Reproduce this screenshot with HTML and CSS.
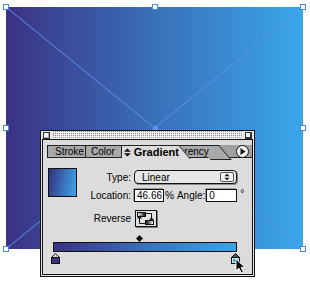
FILE: index.html
```html
<!DOCTYPE html>
<html>
<head>
<meta charset="utf-8">
<title>Gradient palette</title>
<link rel="stylesheet" href="styles.css">
</head>
<body>
<div class="stage">
  <div class="art">
    <svg class="diag" viewBox="0 0 297 242" preserveAspectRatio="none">
      <line x1="0" y1="0" x2="297" y2="242"/>
      <line x1="297" y1="0" x2="0" y2="242"/>
    </svg>
    <span class="h l t"></span><span class="h c t"></span><span class="h r t"></span>
    <span class="h l m"></span><span class="h r m"></span>
    <span class="h l b"></span><span class="h c b"></span><span class="h r b"></span>
    <span class="pivot"></span>
  </div>

  <div class="palette">
    <div class="titlebar">
      <span class="closebox"></span>
      <span class="grip"></span>
      <span class="zoombox"></span>
    </div>
    <div class="body">
      <div class="tabs">
        <div class="tab stroke">Stroke</div>
        <div class="tab color">Color</div>
        <div class="tab active">
          <svg class="updown" width="7" height="9" viewBox="0 0 7 9"><polygon points="0,3.8 3.5,0.3 7,3.8"/><polygon points="0,5.2 3.5,8.7 7,5.2"/></svg>
          <span>Gradient</span>
        </div>
        <div class="tab back"><span class="backtext">Transparency</span></div>
        <div class="tabfill">
          <svg class="menubtn" width="14" height="13" viewBox="0 0 14 13"><circle cx="6.5" cy="6.5" r="6" fill="#f4f4f4" stroke="#111"/><polygon points="4.5,3 4.5,10 9.5,6.5" fill="#111"/></svg>
        </div>
      </div>

      <div class="content">
        <div class="top">
          <div class="swatch"></div>
          <div class="form">
            <div class="row r1">
              <label>Type:</label>
              <div class="popup">
                <span>Linear</span>
                <span class="stepper"><svg width="12" height="8" viewBox="0 0 12 8"><polygon points="3.5,3.3 6,0.8 8.5,3.3"/><polygon points="3.5,4.7 6,7.2 8.5,4.7"/></svg></span>
              </div>
            </div>
            <div class="row r2">
              <label>Location:</label>
              <span class="field loc">46.66</span>
              <span class="pct">%</span>
              <span class="angle">Angle:</span>
              <span class="field ang">0</span>
              <span class="deg">°</span>
            </div>
            <div class="row r3">
              <label>Reverse</label>
              <span class="revbtn">
                <svg width="20" height="15" viewBox="0 0 20 15">
                  <defs>
                    <linearGradient id="g1" x1="0" x2="1" y1="0" y2="0"><stop offset="0" stop-color="#fff"/><stop offset="1" stop-color="#000"/></linearGradient>
                    <linearGradient id="g2" x1="0" x2="1" y1="0" y2="0"><stop offset="0" stop-color="#000"/><stop offset="1" stop-color="#fff"/></linearGradient>
                  </defs>
                  <rect x="1.5" y="1.5" width="8" height="4" fill="url(#g1)" stroke="#111"/>
                  <path d="M10 2.5 H15.5 V8" fill="none" stroke="#111"/>
                  <polygon points="13,7.5 18,7.5 15.5,10.5" fill="#111"/>
                  <rect x="9.5" y="9.5" width="8" height="4" fill="url(#g2)" stroke="#111"/>
                  <path d="M9 12.5 H3.5 V7" fill="none" stroke="#111"/>
                  <polygon points="1,7.5 6,7.5 3.5,4.5" fill="#111"/>
                </svg>
              </span>
            </div>
          </div>
        </div>

        <div class="slider">
          <div class="mid">
            <svg class="diamond" style="left:46.66%" width="7" height="7" viewBox="0 0 7 7"><polygon points="3.5,0 7,3.5 3.5,7 0,3.5"/></svg>
          </div>
          <div class="bar"></div>
          <div class="stops">
            <svg class="stop first" width="9" height="11" viewBox="0 0 9 11"><polygon points="4.5,0.5 8.5,4.5 0.5,4.5" fill="#d8d8d8" stroke="#111"/><rect x="0.5" y="4.5" width="8" height="6" fill="#3b3284" stroke="#111"/></svg>
            <svg class="stop last" width="9" height="11" viewBox="0 0 9 11"><polygon points="4.5,0.5 8.5,4.5 0.5,4.5" fill="#555" stroke="#111"/><rect x="0.5" y="4.5" width="8" height="6" fill="#3aa6ea" stroke="#111"/><rect x="1.5" y="5.5" width="6" height="4" fill="none" stroke="#cfe8fa"/></svg>
          </div>
        </div>
      </div>
    </div>
  </div>

  <svg class="cursor" width="12" height="17" viewBox="0 0 12 17"><path d="M1 1 L1 13 L4 10.2 L6.3 15 L8.4 14 L6.2 9.3 L10 9.3 Z" fill="#000" stroke="#fff" stroke-width="1" stroke-linejoin="miter"/></svg>
</div>
</body>
</html>
```
FILE: styles.css
```css
* { box-sizing: border-box; }
html, body { margin: 0; background: #fff; }
body {
  font-family: "Liberation Sans", Arial, sans-serif;
  font-size: 10px;
  color: #000;
}
.stage {
  position: relative;
  width: 310px;
  height: 283px;
  overflow: hidden;
}

/* artwork on the canvas */
.art {
  position: absolute;
  left: 6px;
  top: 7px;
  width: 297px;
  height: 242px;
  background: linear-gradient(to right, #3b3284 0%, #3a6cb6 46.66%, #3aa6ea 100%);
}
.diag {
  position: absolute;
  left: 0;
  top: 0;
  width: 100%;
  height: 100%;
}
.diag line { stroke: #5c92ea; stroke-width: 1; }
.h {
  position: absolute;
  width: 6px;
  height: 6px;
  margin: -3px 0 0 -3px;
  background: #fff;
  border: 1px solid #4a86e2;
}
.h.l { left: 0; }
.h.c { left: 50%; }
.h.r { left: 100%; }
.h.t { top: 0; }
.h.m { top: 50%; }
.h.b { top: 100%; }
.pivot {
  position: absolute;
  left: 50%;
  top: 50%;
  width: 5px;
  height: 5px;
  margin: -2px 0 0 -2px;
  background: #5a96ee;
}

/* floating palette window */
.palette {
  position: absolute;
  left: 40px;
  top: 130px;
  width: 215px;
  height: 147px;
  border: 1px solid #111;
  background: #e8e8e8;
  display: flex;
  flex-direction: column;
}
.titlebar {
  height: 8px;
  display: flex;
  align-items: center;
  padding: 0 2px;
}
.closebox {
  width: 7px;
  height: 7px;
  border: 1px solid #333;
  background: #f4f4f4;
  box-shadow: inset -1px -1px 0 #aaa;
}
.grip {
  flex: 1;
  height: 8px;
  margin: 0 2px 0 3px;
  background:
    linear-gradient(90deg, transparent 1px, #efefef 1px) 0 0 / 2px 2px,
    linear-gradient(transparent 1px, #efefef 1px) 0 0 / 2px 2px,
    #8e8e8e;
}
.zoombox {
  position: relative;
  width: 7px;
  height: 7px;
  border: 1px solid #333;
  background: #f4f4f4;
}
.zoombox::after {
  content: "";
  position: absolute;
  left: 0;
  top: 0;
  width: 4px;
  height: 4px;
  border-right: 1px solid #333;
  border-bottom: 1px solid #333;
}
.body {
  flex: 1;
  margin: 0 1px 1px;
  border: 1px solid #111;
  background: #dcdcdc;
  display: flex;
  flex-direction: column;
}

/* tabs */
.tabs {
  height: 18px;
  display: flex;
  align-items: flex-end;
  padding-left: 4px;
}
.tab {
  position: relative;
  height: 13px;
  border: 1px solid #222;
  border-right: 0;
  background: #a9a9a9;
  line-height: 11px;
  white-space: nowrap;
}
.tab.stroke { width: 38px; padding-left: 7px; }
.tab.color { width: 36px; padding-left: 5px; }
.tab.active {
  width: 58px;
  border-bottom: 0;
  background: #dcdcdc;
  z-index: 2;
  padding-left: 2px;
  display: flex;
  align-items: center;
  gap: 3px;
  font-weight: bold;
  font-size: 11px;
  line-height: 12px;
}
.tab.back {
  width: 74px;
  margin-left: -34px;
  z-index: 1;
  padding-left: 2px;
}
.tab.active::after,
.tab.back::after {
  content: "";
  position: absolute;
  top: -1px;
  right: 0;
  width: 20px;
  height: 13px;
  border-top: 1px solid #222;
  border-right: 1px solid #222;
  background: inherit;
  transform: skewX(40deg);
  transform-origin: 0 0;
  z-index: -1;
}
.tab.back::after { border-bottom: 1px solid #222; }
.updown { display: block; fill: #111; }
.tabfill {
  flex: 1;
  height: 13px;
  border-bottom: 1px solid #222;
  background: #a0a0a0;
  display: flex;
  align-items: center;
  padding-left: 17px;
}
.menubtn { display: block; }

/* content */
.content {
  flex: 1;
  padding: 10px 0 0 5px;
}
.top {
  display: flex;
  align-items: flex-start;
}
.swatch {
  width: 29px;
  height: 29px;
  border: 1px solid #111;
  background: linear-gradient(100deg, #34307e, #3a6cb6 50%, #3aa6ea);
}
.form {
  margin-top: 2px;
  display: flex;
  flex-direction: column;
}
.row {
  display: flex;
  align-items: center;
}
.row label {
  width: 54px;
  margin-right: 3px;
  text-align: right;
}
.r1 { height: 14px; }
.r2 { height: 13px; margin-top: 5px; }
.r3 { height: 17px; margin-top: 8px; }

.popup {
  width: 103px;
  height: 14px;
  border: 1px solid #111;
  border-radius: 4px;
  background: #e6e6e6;
  box-shadow: 1px 1px 0 #8a8a8a;
  display: flex;
  align-items: center;
  justify-content: space-between;
  padding: 0 2px 0 7px;
}
.stepper {
  width: 14px;
  height: 10px;
  border: 1px solid #555;
  border-radius: 2px;
  background: #f2f2f2;
  display: flex;
  align-items: center;
  justify-content: center;
}
.stepper svg { display: block; fill: #111; }

.field {
  height: 13px;
  border: 1px solid #111;
  background: #fff;
  padding-left: 2px;
  line-height: 11px;
  box-shadow: -1px -1px 0 #9a9a9a;
}
.field.loc { width: 30px; }
.field.ang { width: 31px; margin-left: 1px; }
.pct { margin-left: 1px; }
.angle { margin-left: 3px; }
.deg {
  margin-left: 3px;
  align-self: flex-start;
  line-height: 10px;
  margin-top: 0;
}
.revbtn {
  margin-left: 1px;
  width: 22px;
  height: 17px;
  border: 1px solid #111;
  background: #e2e2e2;
  box-shadow: 1px 1px 0 #7a7a7a;
}
.revbtn svg { display: block; }

/* gradient slider */
.slider {
  width: 184px;
  margin: 8px 0 0 5px;
}
.mid {
  position: relative;
  height: 7px;
}
.diamond {
  position: absolute;
  top: 0;
  margin-left: -3px;
  fill: #111;
  display: block;
}
.bar {
  height: 10px;
  border: 1px solid #111;
  background: linear-gradient(to right, #3b3284 0%, #3a6cb6 46.66%, #3aa6ea 100%);
}
.stops {
  position: relative;
  height: 11px;
  margin-top: 1px;
}
.stop {
  position: absolute;
  top: 0;
  display: block;
}
.stop.first { left: -2px; }
.stop.last { left: 178px; }

.cursor {
  position: absolute;
  left: 235px;
  top: 258px;
  display: block;
}
```
